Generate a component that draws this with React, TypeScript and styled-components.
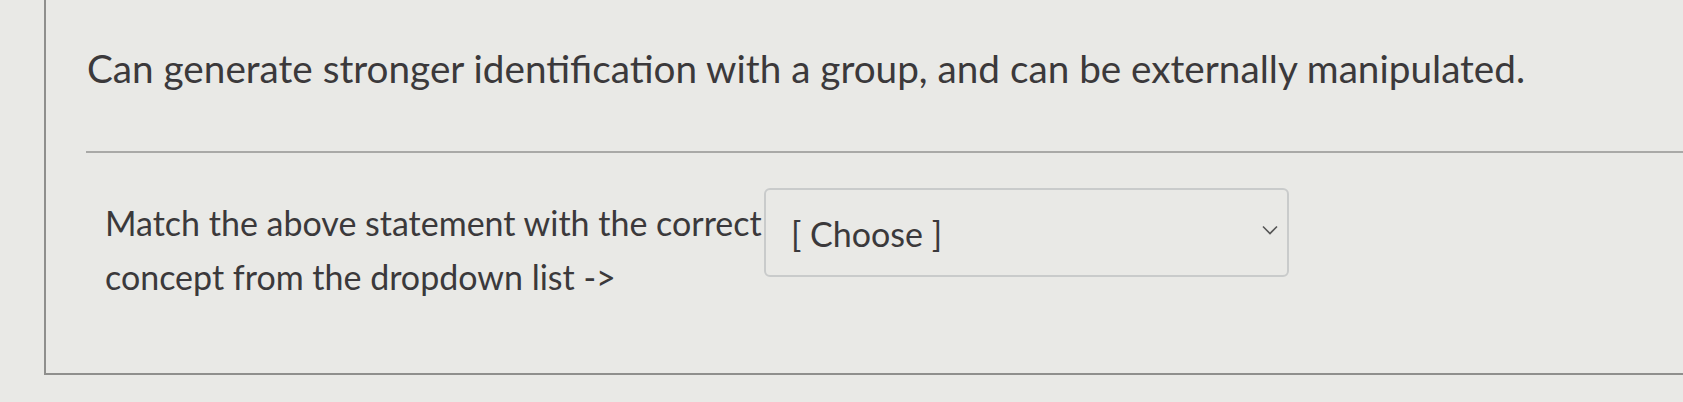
import styled, { createGlobalStyle } from 'styled-components';

const GlobalStyle = createGlobalStyle`
  html, body {
    margin: 0;
    padding: 0;
    background: #e9e9e6;
    overflow: hidden;
  }
  body {
    width: 1683px;
    height: 402px;
    font-family: Lato, 'Noto Sans', sans-serif;
    color: #3b393b;
  }
`;

const Page = styled.div`
  width: 1683px;
  height: 402px;
  padding-left: 44px;
  box-sizing: border-box;
`;

const QuestionCard = styled.div`
  width: 1700px;
  height: 375px;
  border-left: 2px solid #8f8f8d;
  border-bottom: 2px solid #8f8f8d;
  box-sizing: border-box;
  display: flex;
  flex-direction: column;
`;

const Statement = styled.div`
  padding: 42px 0 0 41px;
  height: 151px;
  box-sizing: border-box;
  font-size: 38.7px;
  line-height: 52px;
`;

const Divider = styled.hr`
  margin: 0 0 0 40px;
  border: none;
  border-top: 2px solid #a9a9a7;
`;

const AnswerRow = styled.div`
  display: flex;
  align-items: flex-start;
  padding: 35px 0 0 59px;
`;

const Prompt = styled.div`
  width: 659px;
  margin-top: 8px;
  font-size: 34px;
  line-height: 54px;
`;

const Select = styled.div`
  width: 525px;
  height: 89px;
  box-sizing: border-box;
  border: 2px solid #c9cbcb;
  border-radius: 6px;
  display: flex;
  align-items: flex-start;
  justify-content: space-between;
  padding: 24px 9px 0 25px;
  font-size: 34px;
  line-height: 40px;
`;

const Chevron = styled.svg`
  margin-top: 11px;
`;

export default function App() {
  return (
    <>
      <GlobalStyle />
      <Page>
        <QuestionCard>
          <Statement>
            Can generate stronger identification with a group, and can be externally manipulated.
          </Statement>
          <Divider />
          <AnswerRow>
            <Prompt>
              Match the above statement with the correct concept from the dropdown list -&gt;
            </Prompt>
            <Select>
              <span>[ Choose ]</span>
              <Chevron width="16" height="10" viewBox="0 0 16 10" fill="none">
                <path d="M1 1.5 L8 8.5 L15 1.5" stroke="#555" strokeWidth="1.6" />
              </Chevron>
            </Select>
          </AnswerRow>
        </QuestionCard>
      </Page>
    </>
  );
}
